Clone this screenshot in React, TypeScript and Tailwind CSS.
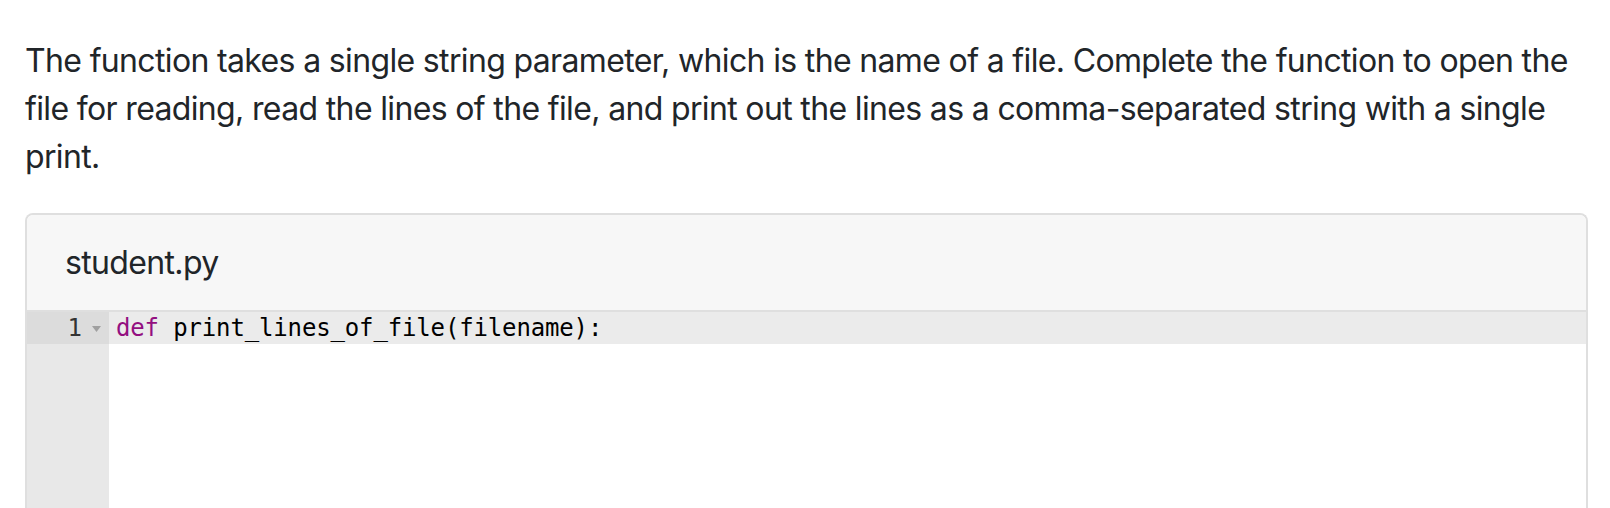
export default function App() {
  const sans = "font-['Inter','Noto_Sans',sans-serif]";
  return (
    <div className={`h-[508px] overflow-hidden bg-white px-[25px] pt-[37px] text-[#212529] ${sans}`}>
      <div className="w-[1563px]">
        <p className="mb-8 text-[32px] leading-[48px] tracking-[-0.65px]">
          The function takes a single string parameter, which is the name of a file. Complete the function to open the
          <br />
          file for reading, read the lines of the file, and print out the lines as a comma-separated string with a single
          <br />
          print.
        </p>

        <div className="overflow-hidden rounded-t-lg border-2 border-b-0 border-[#dfdfdf]">
          <div className="border-b-2 border-[#dfdfdf] bg-[#f7f7f7] px-[38px] py-6 text-[32px] leading-[47px] tracking-[-0.65px]">
            student.py
          </div>

          <div className="flex h-[260px] font-['DejaVu_Sans_Mono','Liberation_Mono',monospace] text-[24px] leading-[32px]">
            <div className="w-[82px] shrink-0 bg-[#e8e8e8]">
              <div className="relative flex h-8 items-center bg-[#dcdcdc] pr-[27px] text-[#333]">
                <span className="ml-auto">1</span>
                <svg
                  className="absolute right-[8px] top-[14px]"
                  width="9"
                  height="6"
                  viewBox="0 0 9 6"
                >
                  <path d="M0 0 L9 0 L4.5 6 Z" fill="#a0a0a0" />
                </svg>
              </div>
            </div>
            <div className="flex-1">
              <div className="h-8 bg-[#ebebeb] pl-[7px] tracking-[-0.15px] text-black">
                <span className="text-[#930f80]">def</span> print_lines_of_file(filename):
              </div>
            </div>
          </div>
        </div>
      </div>
    </div>
  );
}
